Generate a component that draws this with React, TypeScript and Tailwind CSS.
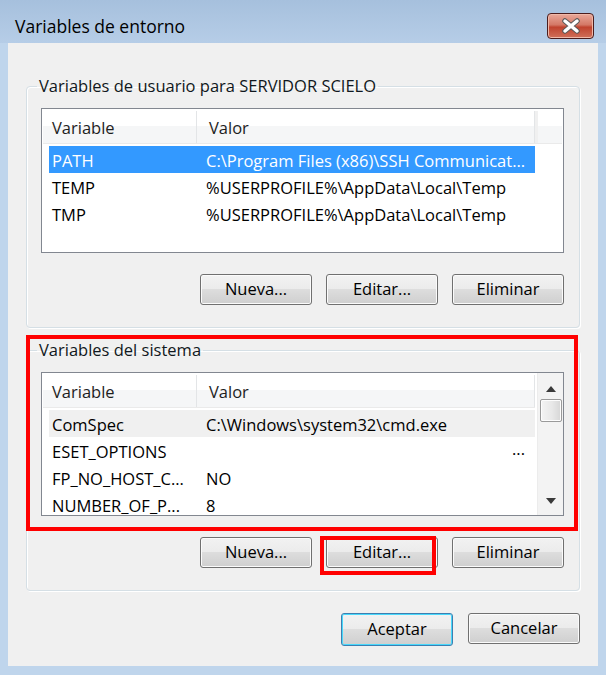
import React from 'react';

type Row = { name: string; value: string; selected?: boolean; hover?: boolean; dots?: boolean };

const userVars: Row[] = [
  { name: 'PATH', value: 'C:\\Program Files (x86)\\SSH Communicat...', selected: true },
  { name: 'TEMP', value: '%USERPROFILE%\\AppData\\Local\\Temp' },
  { name: 'TMP', value: '%USERPROFILE%\\AppData\\Local\\Temp' },
];

const systemVars: Row[] = [
  { name: 'ComSpec', value: 'C:\\Windows\\system32\\cmd.exe', hover: true },
  { name: 'ESET_OPTIONS', value: '', dots: true },
  { name: 'FP_NO_HOST_C...', value: 'NO' },
  { name: 'NUMBER_OF_P...', value: '8' },
];

function Btn({ label, primary }: { label: string; primary?: boolean }) {
  return (
    <button
      className={`w-[112px] rounded-[3px] border text-[16.5px] text-black bg-[linear-gradient(#f2f2f2_0%,#ebebeb_50%,#dddddd_50%,#cfcfcf_100%)] ${
        primary
          ? 'h-[33px] border-[#3c7fb1] shadow-[inset_0_0_0_1px_#48d8fb]'
          : 'h-[31px] border-[#707070] shadow-[inset_0_0_0_1px_#fbfbfb]'
      }`}
    >
      {label}
    </button>
  );
}

function Header({ extra }: { extra?: boolean }) {
  return (
    <div className="flex h-[33px] mt-[2px] mx-[1px] text-[16.5px] text-[#1e1e1e] bg-[linear-gradient(#ffffff_0%,#ffffff_48%,#f5f6f7_48%,#f5f6f7_100%)] border-b border-[#eaeaea]">
      <div className="w-[154px] pl-[9px] pt-[3px] flex items-center border-r border-[#e3e5e7]">Variable</div>
      <div className="w-[338px] pl-[12px] pt-[3px] flex items-center border-r border-[#e3e5e7]">Valor</div>
      {extra && <div className="flex-1 border-l-[3px] border-[#f0f0f0]" />}
    </div>
  );
}

function Rows({ rows }: { rows: Row[] }) {
  return (
    <div className="mt-[2px] pl-[7px]">
      {rows.map(r => (
        <div
          key={r.name}
          className={`flex h-[27px] w-[486px] items-center pt-[4px] text-[16.5px] ${
            r.selected ? 'bg-[#3399ff] text-white' : r.hover ? 'bg-[#f0f0f0] text-black' : 'text-black'
          }`}
        >
          <div className="w-[157px] pl-[3px] whitespace-nowrap overflow-hidden">{r.name}</div>
          <div className="flex-1 whitespace-nowrap overflow-hidden">{r.value}</div>
          {r.dots && <div className="pr-[10px] leading-none pb-[6px]">...</div>}
        </div>
      ))}
    </div>
  );
}

function ScrollBar() {
  return (
    <div className="w-[26px] bg-[#f3f3f3] border-l border-[#ececec] flex flex-col items-center">
      <svg width="12" height="8" viewBox="0 0 12 8" className="mt-[12px]">
        <path d="M1 7 L6 1 L11 7 Z" fill="#3a3a3a" />
      </svg>
      <div className="mt-[6px] w-[22px] h-[23px] rounded-[2px] border border-[#9a9a9a] bg-[linear-gradient(90deg,#f4f4f4_0%,#e8e8e8_55%,#d6d6d6_100%)] shadow-[inset_0_0_0_1px_#fdfdfd]" />
      <div className="flex-1" />
      <svg width="12" height="8" viewBox="0 0 12 8" className="mb-[10px]">
        <path d="M1 1 L6 7 L11 1 Z" fill="#3a3a3a" />
      </svg>
    </div>
  );
}

function Group({ title, children }: { title: string; children: React.ReactNode }) {
  return (
    <fieldset className="border border-[#d5dfe5] rounded-[4px] pl-[14px] pr-[15px] shadow-[inset_1px_1px_0_#ffffff,1px_1px_0_#ffffff]">
      <legend className="-ml-[4px] px-[2px] text-[16.5px] leading-[20px] text-[#101820]">{title}</legend>
      {children}
    </fieldset>
  );
}

export default function App() {
  return (
    <div className="relative w-[606px] h-[675px] overflow-hidden bg-[#bfd5ec] font-['Open_Sans',sans-serif]">
      {/* Title bar */}
      <div className="h-[43px] flex items-start bg-[linear-gradient(#a6c0dd_0%,#b6cde7_100%)]">
        <div className="pl-[15px] pt-[13px] text-[17.5px] leading-[26px] text-black">Variables de entorno</div>
        <button className="ml-auto mr-[12px] mt-[13px] w-[47px] h-[26px] rounded-[4px] border border-[#4b1d1d] bg-[linear-gradient(#e9a99a_0%,#d47866_45%,#c0432e_55%,#d0705a_100%)] shadow-[inset_0_0_0_1px_#f0b8a8] flex items-center justify-center">
          <svg width="20" height="16" viewBox="0 0 20 16">
            <path d="M4 3 L16 13 M16 3 L4 13" stroke="#5a5a5a" strokeWidth="5.5" strokeLinecap="round" />
            <path d="M4 3 L16 13 M16 3 L4 13" stroke="#ffffff" strokeWidth="3.5" strokeLinecap="round" />
          </svg>
        </button>
      </div>

      {/* Client area */}
      <div className="mx-[8px] h-[623px] bg-[#f0f0f0] px-[18px] pt-[33px]">
        <Group title="Variables de usuario para SERVIDOR SCIELO">
          <div className="mt-[12px] h-[145px] border border-[#828790] bg-white">
            <Header extra />
            <Rows rows={userVars} />
          </div>
          <div className="mt-[21px] mb-[22px] flex justify-end gap-[14px]">
            <Btn label="Nueva..." />
            <Btn label="Editar..." />
            <Btn label="Eliminar" />
          </div>
        </Group>

        <div className="mt-[12px]">
          <Group title="Variables del sistema">
            <div className="mt-[12px] h-[144px] border border-[#828790] bg-white flex">
              <div className="w-[494px]">
                <Header />
                <Rows rows={systemVars} />
              </div>
              <div className="flex-1" />
              <ScrollBar />
            </div>
            <div className="mt-[21px] mb-[22px] flex justify-end gap-[14px]">
              <Btn label="Nueva..." />
              <Btn label="Editar..." />
              <Btn label="Eliminar" />
            </div>
          </Group>
        </div>

        <div className="mt-[22px] flex justify-end gap-[15px]">
          <Btn label="Aceptar" primary />
          <Btn label="Cancelar" />
        </div>
      </div>

      {/* Red annotation boxes */}
      <div className="absolute left-[26px] top-[335px] w-[552px] h-[196px] border-[4px] border-[#ff0000]" />
      <div className="absolute left-[320px] top-[536px] w-[116px] h-[39px] border-[4px] border-[#ff0000]" />
    </div>
  );
}
